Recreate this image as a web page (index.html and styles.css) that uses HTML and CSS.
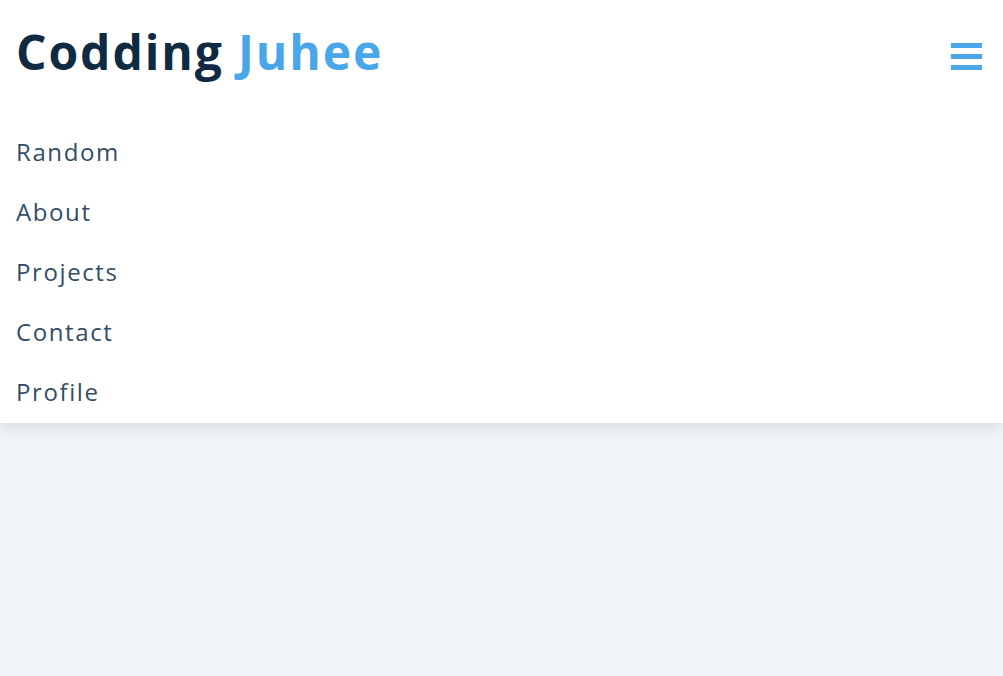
FILE: index.html
```html
<!DOCTYPE html>
<html lang="en">
<head>
<meta charset="utf-8">
<title>Codding Juhee</title>
<link rel="stylesheet" href="styles.css">
</head>
<body>
<nav class="navbar">
  <div class="nav-header">
    <h1 class="logo">Codding <span class="logo-accent">Juhee</span></h1>
    <button class="nav-toggle" aria-label="menu">
      <svg width="31" height="27" viewBox="0 0 31 27"><rect x="0" y="0" width="31" height="5" fill="#49a6e9"/><rect x="0" y="11" width="31" height="5" fill="#49a6e9"/><rect x="0" y="22" width="31" height="5" fill="#49a6e9"/></svg>
    </button>
  </div>
  <ul class="links">
    <li><a href="#">Random</a></li>
    <li><a href="#">About</a></li>
    <li><a href="#">Projects</a></li>
    <li><a href="#">Contact</a></li>
    <li><a href="#">Profile</a></li>
  </ul>
</nav>
</body>
</html>
```
FILE: styles.css
```css
* { box-sizing: border-box; margin: 0; padding: 0; }
body {
  background: #f1f5f8;
  font-family: "Open Sans", "Noto Sans", sans-serif;
  height: 676px;
}
.navbar {
  background: #fff;
  box-shadow: 0 5px 15px rgba(0, 0, 0, 0.1);
}
.nav-header {
  display: flex;
  align-items: center;
  justify-content: space-between;
  height: 121px;
  padding: 0 21px 18px 16px;
}
.logo {
  font-size: 48px;
  font-weight: 700;
  letter-spacing: 1.9px;
  color: #102a42;
  line-height: 1;
}
.logo-accent { color: #49a6e9; }
.nav-toggle {
  background: transparent;
  border: none;
  display: flex;
  margin-top: 10px;
}
.links { list-style: none; padding-bottom: 2px; }
.links a {
  display: flex;
  align-items: center;
  height: 60px;
  padding-left: 16px;
  font-size: 24px;
  letter-spacing: 1.6px;
  color: #324d67;
  text-decoration: none;
}
```
